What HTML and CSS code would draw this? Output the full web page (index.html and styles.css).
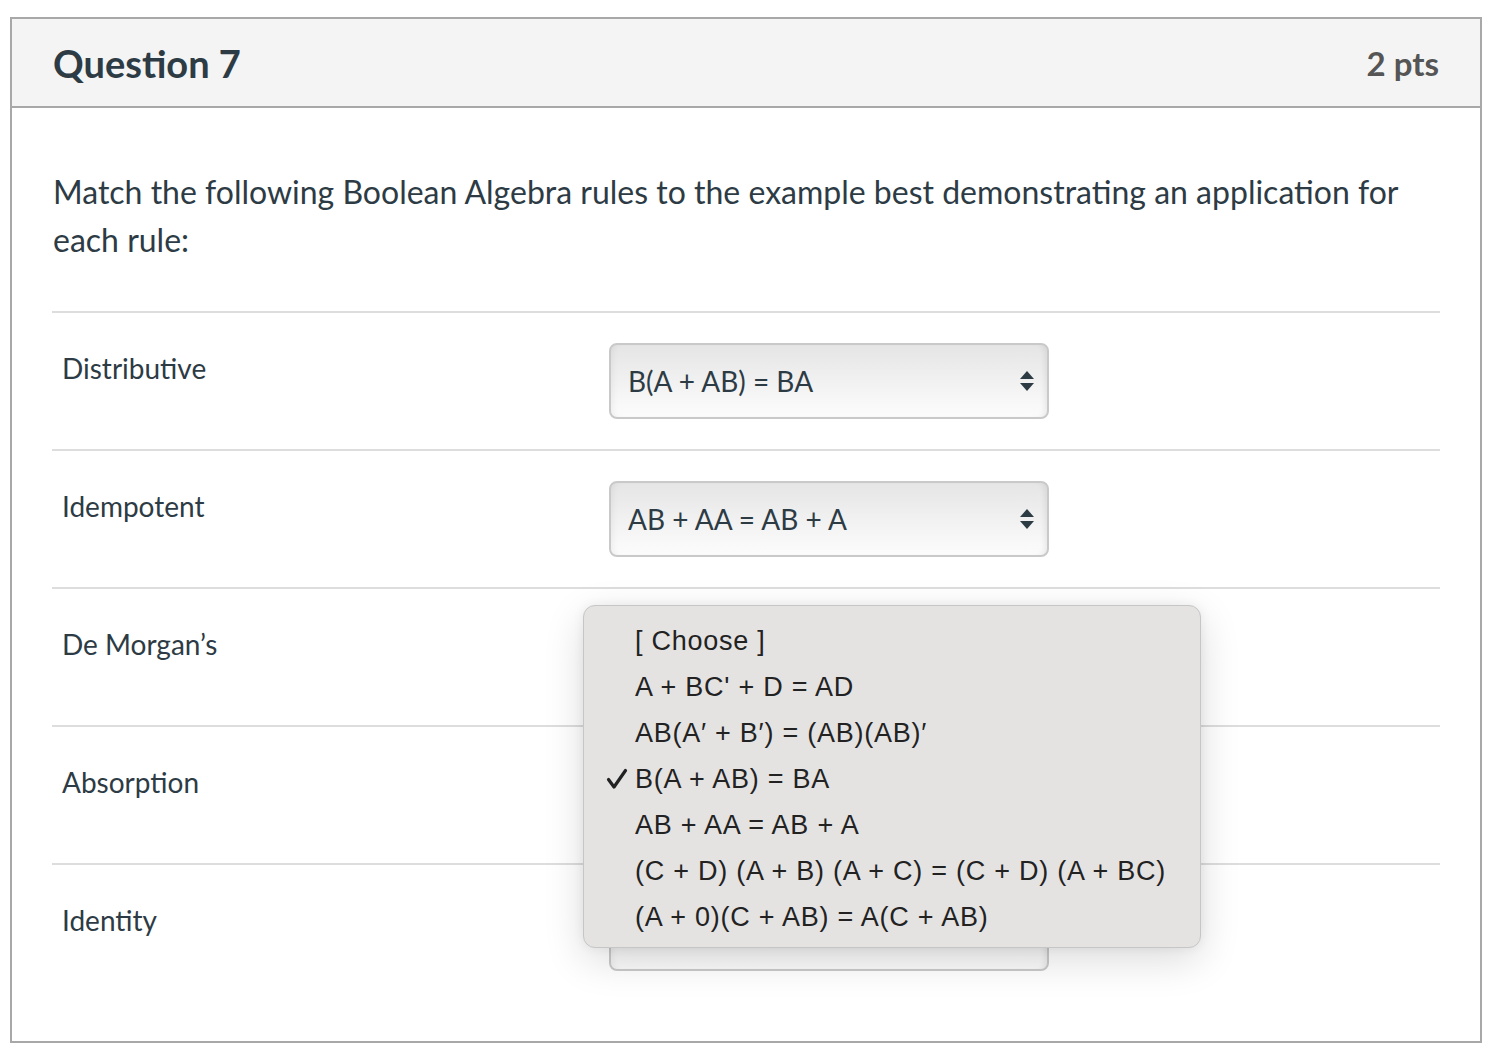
FILE: index.html
```html
<!DOCTYPE html>
<html>
<head>
<meta charset="utf-8">
<link rel="stylesheet" href="styles.css">
</head>
<body>
<div class="page">
  <div class="card">
    <div class="card-header">
      <h2 class="q-title">Question 7</h2>
      <span class="q-pts">2 pts</span>
    </div>
    <div class="card-body">
      <p class="q-text">Match the following Boolean Algebra rules to the example best demonstrating an application for each rule:</p>
      <div class="rows">
        <div class="row">
          <div class="label">Distributive</div>
          <div class="select"><span class="sel-text">B(A + AB) = BA</span><span class="arrows"><i class="up"></i><i class="down"></i></span></div>
        </div>
        <div class="row">
          <div class="label">Idempotent</div>
          <div class="select"><span class="sel-text">AB + AA = AB + A</span><span class="arrows"><i class="up"></i><i class="down"></i></span></div>
        </div>
        <div class="row">
          <div class="label">De Morgan’s</div>
          <div class="select"><span class="sel-text"></span><span class="arrows"><i class="up"></i><i class="down"></i></span></div>
        </div>
        <div class="row">
          <div class="label">Absorption</div>
          <div class="select"><span class="sel-text"></span><span class="arrows"><i class="up"></i><i class="down"></i></span></div>
        </div>
        <div class="row">
          <div class="label">Identity</div>
          <div class="select"><span class="sel-text"></span><span class="arrows"><i class="up"></i><i class="down"></i></span></div>
        </div>
      </div>
    </div>
  </div>
  <ul class="menu">
    <li class="item">[ Choose ]</li>
    <li class="item">A + BC' + D = AD</li>
    <li class="item">AB(A′ + B′) = (AB)(AB)′</li>
    <li class="item checked"><svg class="check" width="22" height="22" viewBox="0 0 22 22"><path d="M2.5 11.5 L8 19 L19.5 2.5" fill="none" stroke="#222" stroke-width="3.2" stroke-linecap="round" stroke-linejoin="round"/></svg>B(A + AB) = BA</li>
    <li class="item">AB + AA = AB + A</li>
    <li class="item">(C + D) (A + B) (A + C) = (C + D) (A + BC)</li>
    <li class="item">(A + 0)(C + AB) = A(C + AB)</li>
  </ul>
</div>
</body>
</html>
```
FILE: styles.css
```css
html, body {
  margin: 0;
  padding: 0;
  background: #ffffff;
}
body {
  font-family: Lato, "Open Sans", sans-serif;
  color: #2d3b45;
}
.page {
  position: relative;
  padding: 17px 0 0 10px;
}
.card {
  width: 1472px;
  box-sizing: border-box;
  border: 2px solid #a8a8a8;
  background: #fff;
}
.card-header {
  height: 87px;
  background: #f4f4f4;
  border-bottom: 2px solid #a8a8a8;
  display: flex;
  align-items: center;
  justify-content: space-between;
  padding: 0 41px 0 41px;
}
.q-title {
  margin: 0;
  font-size: 38px;
  font-weight: 700;
  color: #2d3b45;
}
.q-pts {
  font-size: 33px;
  font-weight: 700;
  color: #555;
}
.card-body {
  padding: 60px 40px 40px 40px;
}
.q-text {
  margin: 0 0 47px 0;
  font-size: 32px;
  line-height: 48px;
  padding-left: 1px;
}
.row {
  border-top: 2px solid #dddddd;
  height: 136px;
  display: grid;
  grid-template-columns: 557px 440px;
  align-items: start;
}
.label {
  padding: 37px 0 0 10px;
  font-size: 28px;
  line-height: 36px;
}
.select {
  margin-top: 30px;
  height: 76px;
  box-sizing: border-box;
  border: 2px solid #c9c9c9;
  border-radius: 8px;
  background: linear-gradient(#e5e5e5, #f9f9f9 85%, #fbfbfb);
  box-shadow: inset -6px 0 6px -4px rgba(0,0,0,0.08), inset 6px 0 6px -4px rgba(0,0,0,0.05);
  display: flex;
  align-items: center;
  justify-content: space-between;
  padding: 0 13px 0 17px;
  font-size: 28px;
  color: #2d3b45;
}
.arrows {
  display: flex;
  flex-direction: column;
  gap: 4px;
  align-items: center;
}
.arrows i {
  display: block;
  width: 0;
  height: 0;
  border-left: 7px solid transparent;
  border-right: 7px solid transparent;
}
.arrows .up {
  border-bottom: 8px solid #2d3b45;
}
.arrows .down {
  border-top: 8px solid #2d3b45;
}
.menu {
  position: absolute;
  left: 583px;
  top: 605px;
  width: 618px;
  height: 343px;
  box-sizing: border-box;
  margin: 0;
  padding: 12px 0 0 0;
  list-style: none;
  background: #e4e3e2;
  border: 1px solid #c6c6c6;
  border-radius: 12px;
  box-shadow: 0 12px 40px rgba(0,0,0,0.14), 0 0 12px rgba(0,0,0,0.06);
  font-family: "Liberation Sans", Arial, sans-serif;
  font-size: 27px;
  color: #222;
}
.item {
  position: relative;
  height: 46px;
  line-height: 46px;
  padding-left: 51px;
  white-space: nowrap;
  letter-spacing: 0.75px;
}
.check {
  position: absolute;
  left: 22px;
  top: 12px;
}
```
